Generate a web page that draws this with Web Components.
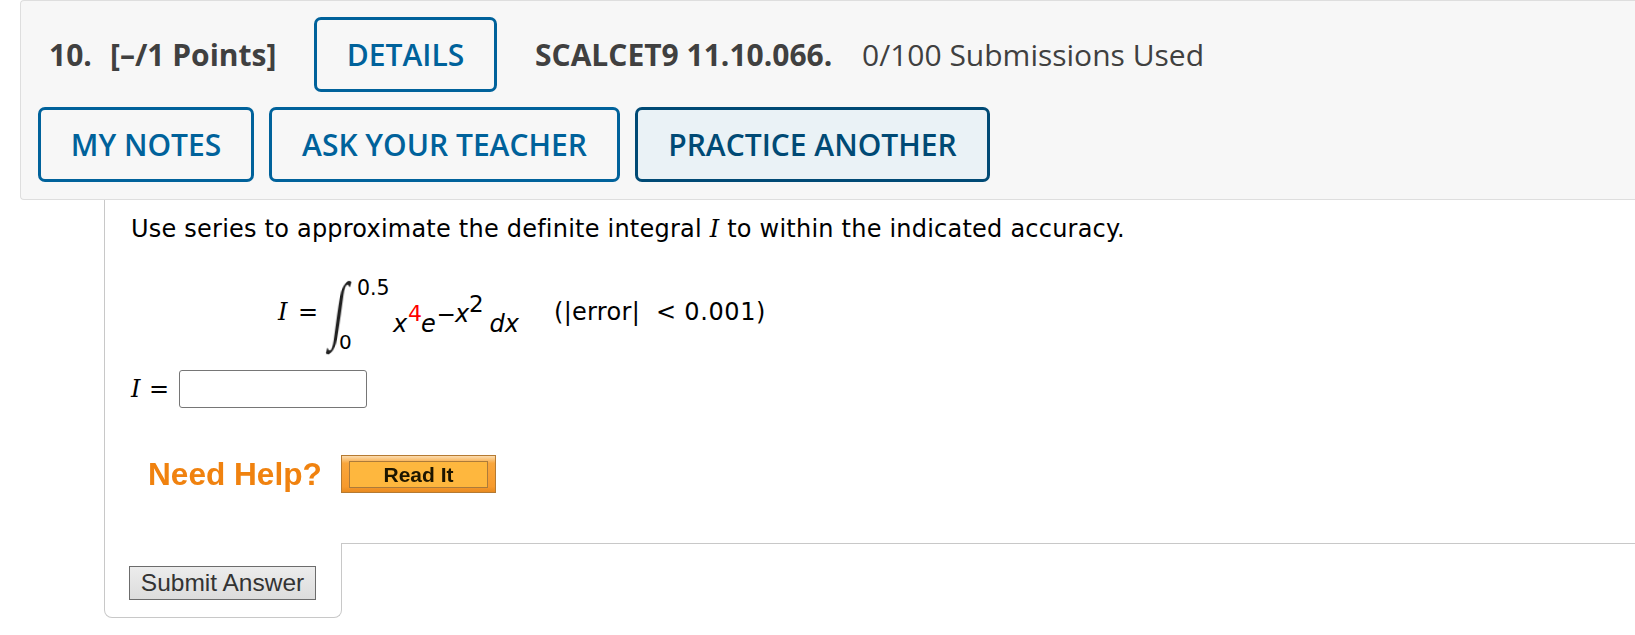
<!DOCTYPE html>
<html>
<head>
<meta charset="utf-8">
<title>Question 10</title>
<style>
  html, body { margin: 0; background: #fff; }
  body { overflow: hidden; height: 635px; }
</style>
</head>
<body>
<wa-question>
  <wa-head slot="head"></wa-head>
  <p-text>Use series to approximate the definite integral <i-var>I</i-var> to within the indicated accuracy.</p-text>
  <wa-formula></wa-formula>
  <wa-answer></wa-answer>
  <wa-help></wa-help>
</wa-question>

<script>
class WaButton extends HTMLElement {
  constructor() {
    super();
    this.attachShadow({ mode: "open" });
    this.shadowRoot.innerHTML = `
      <style>
        :host {
          display: flex;
          align-items: center;
          justify-content: center;
          box-sizing: border-box;
          height: 75px;
          border: 3px solid #00629b;
          border-radius: 7px;
          color: #00629b;
          font: 600 30px "Open Sans", sans-serif;
        }
        :host([active]) {
          border-color: #004a75;
          color: #004a75;
          background: #eaf2f6;
        }
      </style>
      <slot></slot>
    `;
  }
}

class WaHead extends HTMLElement {
  constructor() {
    super();
    this.attachShadow({ mode: "open" });
    this.shadowRoot.innerHTML = `
      <style>
        :host {
          display: block;
          box-sizing: border-box;
          height: 200px;
          margin-left: 20px;
          padding-top: 16px;
          background: #f7f7f7;
          border: 1px solid #dedede;
          border-right: 0;
          border-radius: 4px 0 0 4px;
          color: #404040;
          font: 400 30px "Open Sans", sans-serif;
        }
        .row { display: flex; align-items: center; }
        .one { padding-left: 28px; }
        .two { padding-left: 17px; margin-top: 15px; gap: 15px; }
        .num { font-weight: 700; width: 61px; }
        .pts { font-weight: 700; width: 204px; }
        .code { font-weight: 700; margin-left: 38px; width: 327px; }
        wa-button.details { width: 183px; }
        wa-button.notes { width: 216px; }
        wa-button.ask { width: 351px; }
        wa-button.practice { width: 355px; }
      </style>
      <div class="row one">
        <span class="num">10.</span>
        <span class="pts">[–/1 Points]</span>
        <wa-button class="details">DETAILS</wa-button>
        <span class="code">SCALCET9 11.10.066.</span>
        <span>0/100 Submissions Used</span>
      </div>
      <div class="row two">
        <wa-button class="notes">MY NOTES</wa-button>
        <wa-button class="ask">ASK YOUR TEACHER</wa-button>
        <wa-button class="practice" active>PRACTICE ANOTHER</wa-button>
      </div>
    `;
  }
}

class IVar extends HTMLElement {
  constructor() {
    super();
    this.attachShadow({ mode: "open" });
    this.shadowRoot.innerHTML = `
      <style>
        :host { font: italic 24px "DejaVu Serif", serif; }
      </style>
      <slot></slot>
    `;
  }
}

class PText extends HTMLElement {
  constructor() {
    super();
    this.attachShadow({ mode: "open" });
    this.shadowRoot.innerHTML = `
      <style>
        :host {
          display: block;
          height: 44px;
          padding-top: 14px;
          color: #000;
          font: 24px/30px "DejaVu Sans", sans-serif;
          letter-spacing: 0.22px;
          white-space: nowrap;
        }
      </style>
      <slot></slot>
    `;
  }
}

// the equation is a reference image: every part sits on its own top offset
class WaFormula extends HTMLElement {
  constructor() {
    super();
    this.attachShadow({ mode: "open" });
    this.shadowRoot.innerHTML = `
      <style>
        :host {
          display: flex;
          align-items: flex-start;
          height: 112px;
          padding-left: 147px;
          color: #000;
          font: 24px/1 "DejaVu Sans", sans-serif;
          white-space: nowrap;
        }
        span { display: block; flex: none; }
        .it { font-style: italic; }
        .var { width: 20px; margin-top: 42px; font-family: "DejaVu Serif", serif; }
        .eq { width: 28px; margin-top: 42px; }
        .int {
          width: 13px;
          margin-top: 13px;
          font: 75px/75px "Liberation Serif", serif;
          color: #222;
          transform: translateX(3px) skewX(-8deg) scaleX(0.55);
          transform-origin: 12px 37px;
          filter: blur(0.4px);
        }
        .limits { display: flex; flex-direction: column; flex: none; width: 54px; margin-top: 20px; height: 74px; justify-content: space-between; font-size: 20px; }
        .limits .up { margin-left: 18px; font-size: 20.5px; }
        .x { width: 15px; margin-top: 54px; }
        .four { width: 13px; margin-top: 45px; color: #f00; font-size: 22px; }
        .e { width: 15.6px; margin-top: 54px; }
        .minus { width: 18.4px; margin-top: 45px; font-size: 23px; }
        .x2 { width: 14px; margin-top: 44px; }
        .two { width: 20.5px; margin-top: 35px; font-size: 23px; }
        .dx { width: 64.5px; margin-top: 54px; }
        .err { margin-top: 42px; letter-spacing: 0.3px; }
        .err span { display: inline; }
        .g1 { word-spacing: 8px; }
        .g2 { word-spacing: 0; }
        .num { letter-spacing: 0.6px; }
      </style>
      <span class="var it">I</span>
      <span class="eq">=</span>
      <span class="int">∫</span>
      <div class="limits"><span class="up">0.5</span><span>0</span></div>
      <span class="x it">x</span>
      <span class="four">4</span>
      <span class="e it">e</span>
      <span class="minus">−</span>
      <span class="x2 it">x</span>
      <span class="two">2</span>
      <span class="dx it">dx</span>
      <span class="err">(|error|<span class="g1"> </span>&lt;<span class="g2"> </span><span class="num">0.001)</span></span>
    `;
  }
}

class WaAnswer extends HTMLElement {
  constructor() {
    super();
    this.attachShadow({ mode: "open" });
    this.shadowRoot.innerHTML = `
      <style>
        :host {
          display: flex;
          align-items: center;
          height: 38px;
          color: #000;
          font: 24px "DejaVu Sans", sans-serif;
        }
        .var { width: 18px; font: italic 24px "DejaVu Serif", serif; }
        .eq { width: 30px; }
        input {
          box-sizing: border-box;
          width: 188px;
          height: 38px;
          border: 1px solid #767676;
          border-radius: 3px;
          background: #fff;
          margin: 0;
        }
      </style>
      <span class="var">I</span><span class="eq">=</span><input type="text">
    `;
  }
}

class WaHelp extends HTMLElement {
  constructor() {
    super();
    this.attachShadow({ mode: "open" });
    this.shadowRoot.innerHTML = `
      <style>
        :host {
          display: flex;
          align-items: center;
          height: 38px;
          margin-top: 47px;
          padding-left: 17px;
          font-family: "Liberation Sans", sans-serif;
        }
        .need {
          width: 193px;
          color: #f0820f;
          font-size: 31.6px;
          font-weight: 700;
          filter: blur(0.6px);
        }
        .read {
          display: flex;
          box-sizing: border-box;
          width: 155px;
          height: 38px;
          padding: 5px 7px 4px 7px;
          border: 1px solid #b57a32;
          background: linear-gradient(#fbdcb0 0, #f9a63c 20%, #f79a2c 85%, #e88a20 100%);
        }
        .read span {
          flex: 1;
          display: flex;
          align-items: center;
          justify-content: center;
          border: 1px solid #ad7b3a;
          background: #feb73e;
          color: #1d1600;
          font-size: 21px;
          font-weight: 700;
        }
        .read b { font-weight: 700; filter: blur(0.5px); }
      </style>
      <span class="need">Need Help?</span>
      <div class="read"><span><b>Read It</b></span></div>
    `;
  }
}

class WaQuestion extends HTMLElement {
  constructor() {
    super();
    this.attachShadow({ mode: "open" });
    this.shadowRoot.innerHTML = `
      <style>
        :host { display: block; font-family: "DejaVu Sans", sans-serif; }
        .body {
          box-sizing: border-box;
          height: 343px;
          margin-left: 104px;
          padding-left: 26px;
          border-left: 1px solid #c8c8c8;
        }
        .foot { display: flex; margin-left: 104px; height: 75px; }
        .tab {
          box-sizing: border-box;
          flex: 0 0 238px;
          padding: 23px 0 0 24px;
          border: 1px solid #c8c8c8;
          border-top: 0;
          border-radius: 0 0 8px 8px;
        }
        .rest { flex: 1; border-top: 1px solid #c8c8c8; }
        button {
          display: block;
          box-sizing: border-box;
          width: 187px;
          height: 34px;
          padding: 0;
          border: 1px solid #6c6c6c;
          border-radius: 0;
          background: linear-gradient(#ececec, #dcdcdc);
          color: #333;
          font: 24.5px "Liberation Sans", sans-serif;
        }
      </style>
      <slot name="head"></slot>
      <div class="body"><slot></slot></div>
      <div class="foot">
        <div class="tab"><button type="button">Submit Answer</button></div>
        <div class="rest"></div>
      </div>
    `;
  }
}

customElements.define("wa-button", WaButton);
customElements.define("wa-head", WaHead);
customElements.define("i-var", IVar);
customElements.define("p-text", PText);
customElements.define("wa-formula", WaFormula);
customElements.define("wa-answer", WaAnswer);
customElements.define("wa-help", WaHelp);
customElements.define("wa-question", WaQuestion);
</script>
</body>
</html>
